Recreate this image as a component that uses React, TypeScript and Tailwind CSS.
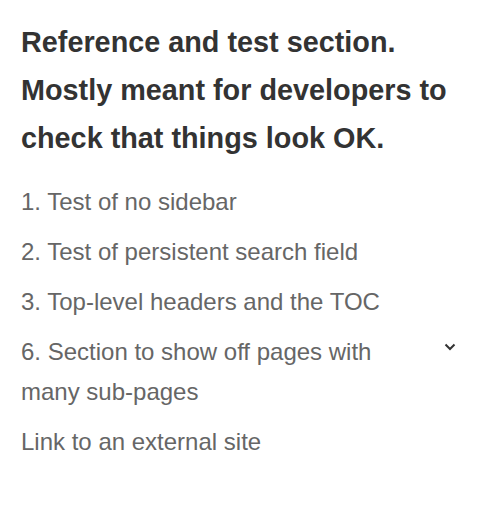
import React from 'react';

const items = [
  '1. Test of no sidebar',
  '2. Test of persistent search field',
  '3. Top-level headers and the TOC',
];

export default function App() {
  return (
    <div className="w-[477px] h-[513px] bg-white px-[21px] pt-[18px]">
      <h2 className="font-['Liberation_Sans'] text-[28.8px] font-bold leading-[48px] text-[#333]">
        Reference and test section. Mostly meant for developers to check that things look OK.
      </h2>
      <ul className="font-['Liberation_Sans'] mt-[15px] text-[24px] text-[#666]">
        {items.map((t) => (
          <li key={t} className="leading-[40px] py-[5px]">
            <a>{t}</a>
          </li>
        ))}
        <li className="py-[5px] flex items-start justify-between">
          <a className="leading-[40px] w-[390px]">6. Section to show off pages with many sub-pages</a>
          <svg className="mt-[9px] shrink-0" width="12" height="12" viewBox="0 0 12 12" fill="none">
            <path d="M1.5 3.5 L6 8 L10.5 3.5" stroke="#333" strokeWidth="2" />
          </svg>
        </li>
        <li className="leading-[40px] py-[5px]">
          <a>Link to an external site</a>
        </li>
      </ul>
    </div>
  );
}
